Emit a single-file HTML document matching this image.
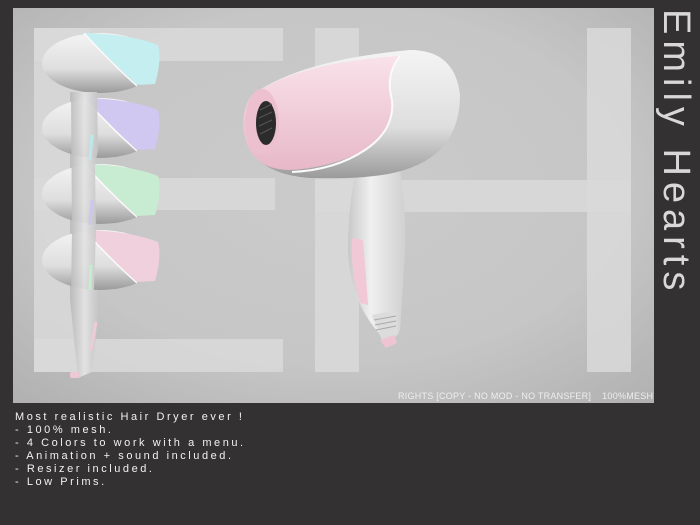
<!DOCTYPE html>
<html><head><meta charset="utf-8">
<style>
html,body{margin:0;padding:0;width:700px;height:525px;overflow:hidden;background:#333132;}
.panel{position:absolute;left:13px;top:8px;width:641px;height:395px;
background:radial-gradient(ellipse 75% 75% at 50% 45%,#cbcbcb 0%,#c6c6c6 60%,#b0b0b0 100%);}
.lt{position:absolute;background:#d9d9d9;opacity:.85}
.brand{position:absolute;left:659px;top:9px;width:33px;height:290px;}
.brand span{position:absolute;left:0;top:0;transform-origin:0 0;transform:translate(33px,0) rotate(90deg);
font:38px "Liberation Sans",sans-serif;color:#d8d8d8;letter-spacing:6px;white-space:nowrap;line-height:33px}
.rights{position:absolute;left:398px;top:391px;font:9px "Liberation Sans",sans-serif;color:#eeeeee;letter-spacing:0.25px;white-space:nowrap}
.desc{position:absolute;left:15px;top:411px;font:11px/13px "Liberation Sans",sans-serif;color:#f2f2f2;letter-spacing:2.55px;white-space:pre}
</style></head><body>
<div class="panel"></div>
<div class="lt" style="left:34px;top:28px;width:249px;height:33px"></div>
<div class="lt" style="left:34px;top:28px;width:56px;height:344px"></div>
<div class="lt" style="left:34px;top:178px;width:241px;height:32px"></div>
<div class="lt" style="left:34px;top:339px;width:249px;height:33px"></div>
<div class="lt" style="left:315px;top:28px;width:44px;height:344px"></div>
<div class="lt" style="left:587px;top:28px;width:44px;height:344px"></div>
<div class="lt" style="left:315px;top:180px;width:316px;height:32px"></div>

<svg width="700" height="525" style="position:absolute;left:0;top:0">
<defs>
<linearGradient id="wh" x1="0" y1="0" x2="0" y2="1"><stop offset="0" stop-color="#f4f4f4"/><stop offset=".6" stop-color="#dedede"/><stop offset="1" stop-color="#9a9a9a"/></linearGradient>
<linearGradient id="whb" x1="0" y1="0" x2="1" y2="0"><stop offset="0" stop-color="#c8c8c8"/><stop offset=".4" stop-color="#f0f0f0"/><stop offset="1" stop-color="#d0d0d0"/></linearGradient>
<linearGradient id="stem" x1="0" y1="0" x2="1" y2="0"><stop offset="0" stop-color="#bdbdbd"/><stop offset=".5" stop-color="#e2e2e2"/><stop offset="1" stop-color="#c4c4c4"/></linearGradient>
<linearGradient id="pk" x1="0" y1="0" x2="0" y2="1"><stop offset="0" stop-color="#f9e2ea"/><stop offset="1" stop-color="#e7b8c8"/></linearGradient>
</defs>
<path d="M70 92 L97 92 L99 300 L92 372 L78 378 L70 300 Z" fill="url(#stem)"/>
<ellipse cx="100" cy="63" rx="58" ry="30" fill="url(#wh)"/>
<path d="M84 33 Q130 34 158 45 Q162 60 155 84 L137 85 Q110 60 84 33Z" fill="#c4eef0"/>
<path d="M84 33 Q110 62 137 86" stroke="#fafafa" stroke-width="1.5" fill="none"/>
<ellipse cx="100" cy="128" rx="58" ry="30" fill="url(#wh)"/>
<path d="M84 98 Q130 99 158 110 Q162 125 155 149 L137 150 Q110 125 84 98Z" fill="#d0c8f0"/>
<path d="M84 98 Q110 127 137 151" stroke="#fafafa" stroke-width="1.5" fill="none"/>
<ellipse cx="100" cy="194" rx="58" ry="30" fill="url(#wh)"/>
<path d="M84 164 Q130 165 158 176 Q162 191 155 215 L137 216 Q110 191 84 164Z" fill="#c8ecd2"/>
<path d="M84 164 Q110 193 137 217" stroke="#fafafa" stroke-width="1.5" fill="none"/>
<ellipse cx="100" cy="260" rx="58" ry="30" fill="url(#wh)"/>
<path d="M84 230 Q130 231 158 242 Q162 257 155 281 L137 282 Q110 257 84 230Z" fill="#f0d0dc"/>
<path d="M84 230 Q110 259 137 283" stroke="#fafafa" stroke-width="1.5" fill="none"/>
<path d="M71 92 L97 92 L98 150 L95 165 L96 230 L94 290 L98 320 L92 368 L79 378 L71 300 L72 230 Z" fill="url(#stem)" opacity=".9"/>
<path d="M92 135 L90 160" stroke="#bde8ea" stroke-width="3"/>
<path d="M92 200 L90 225" stroke="#cfc6ee" stroke-width="3"/>
<path d="M91 265 L90 290" stroke="#c4ecce" stroke-width="3"/>
<path d="M96 322 L91 350" stroke="#efcad8" stroke-width="3"/>
<rect x="70" y="372" width="9" height="6" rx="2" fill="#eec8d6"/>

<path d="M355 175 L400 170 Q408 215 404 268 L400 330 Q396 340 385 342 L378 332 Q350 300 348 250 Q348 210 355 175Z" fill="url(#whb)"/>
<path d="M352 238 L363 240 Q366 275 368 305 L360 303 Q350 270 352 238Z" fill="#f0c8d6"/>
<path d="M372 315 L396 310 L398 334 L382 340 Z" fill="#dcdcdc"/>
<path d="M374 320 L396 316 M375 325 L396 321 M376 330 L396 326" stroke="#a8a8a8" stroke-width="1"/>
<path d="M380 340 L394 335 L397 343 L386 348 Z" fill="#eec4d2"/>
<path d="M252 95 Q300 60 410 50 Q455 50 460 95 Q460 150 410 168 Q380 180 310 178 Q262 175 247 145 Q238 115 252 95Z" fill="url(#wh)"/>
<path d="M252 95 Q300 62 400 56 Q385 75 392 100 Q395 130 365 150 Q330 168 290 170 Q258 170 247 145 Q238 115 252 95Z" fill="url(#pk)"/>
<path d="M400 56 Q385 75 392 100 Q395 130 365 150 Q335 170 292 172" stroke="#fafafa" stroke-width="2" fill="none"/>
<ellipse cx="262" cy="122" rx="17" ry="33" fill="#ecc0ce"/>
<ellipse cx="266" cy="123" rx="10" ry="22" fill="#2b2b2b"/>
<path d="M260 110 l12 -6 M259 118 l13 -6 M259 126 l13 -6 M260 134 l12 -6" stroke="#555" stroke-width="1"/>
</svg>

<div class="brand"><span>Emily Hearts</span></div>
<div class="rights">RIGHTS [COPY - NO MOD - NO TRANSFER]&nbsp;&nbsp;&nbsp; 100%MESH</div>
<div class="desc">Most realistic Hair Dryer ever !
- 100% mesh.
- 4 Colors to work with a menu.
- Animation + sound included.
- Resizer included.
- Low Prims.</div>
</body></html>
